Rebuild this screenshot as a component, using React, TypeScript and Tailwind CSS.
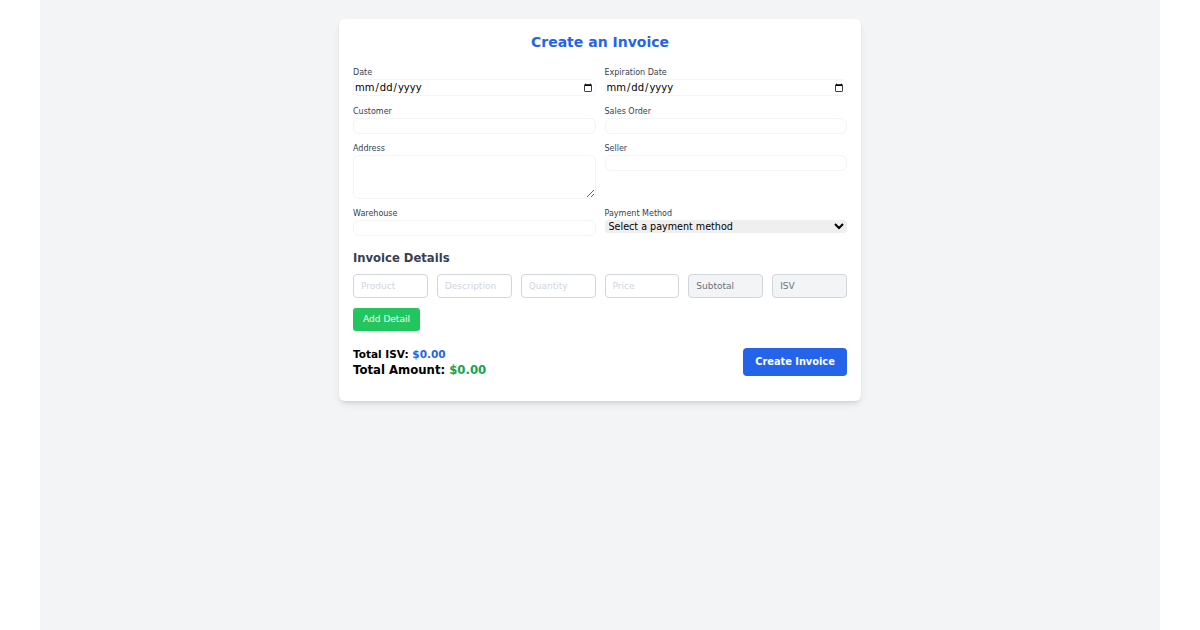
import React, { useState } from "react";

const font = { fontFamily: '"DejaVu Sans", sans-serif' };

function Field(props: { label: string; children: React.ReactNode }) {
  return (
    <div className="flex flex-col">
      <label className="text-[8px] leading-[12px] text-gray-700">{props.label}</label>
      {props.children}
    </div>
  );
}

const plain =
  "w-full h-[16px] rounded-md border border-[#f4f4f6] bg-white text-[10px] leading-[16px] text-black outline-none";

export default function App() {
  const [method, setMethod] = useState("");

  const detailInputs = [
    { ph: "Product", readOnly: false },
    { ph: "Description", readOnly: false },
    { ph: "Quantity", readOnly: false },
    { ph: "Price", readOnly: false },
    { ph: "Subtotal", readOnly: true },
    { ph: "ISV", readOnly: true },
  ];

  return (
    <div className="w-full min-h-screen bg-white" style={font}>
      <div className="mx-auto w-[1120px] min-h-[630px] bg-[#f3f4f6] pt-[19px]">
        <div className="mx-auto w-[522px] rounded-md bg-white px-[14px] pt-[13px] pb-[23px] shadow-md">
          <h1 className="text-center text-[14px] leading-[20px] font-bold text-[#2563eb]">
            Create an Invoice
          </h1>

          <div className="mt-[15px] grid grid-cols-2 gap-x-[9px] gap-y-[9px] items-start">
            <Field label="Date">
              <input type="date" className={plain + " h-[17px] leading-[15px] mb-[1px]"} />
            </Field>
            <Field label="Expiration Date">
              <input type="date" className={plain + " h-[17px] leading-[15px] mb-[1px]"} />
            </Field>
            <Field label="Customer">
              <input type="text" className={plain} />
            </Field>
            <Field label="Sales Order">
              <input type="text" className={plain} />
            </Field>
            <Field label="Address">
              <textarea className="w-full h-[44px] rounded-md border border-[#f4f4f6] bg-white text-[10px] outline-none block" />
            </Field>
            <Field label="Seller">
              <input type="text" className={plain} />
            </Field>
            <Field label="Warehouse">
              <input type="text" className={plain} />
            </Field>
            <Field label="Payment Method">
              <select
                value={method}
                onChange={(e) => setMethod(e.target.value)}
                className="w-full h-[13px] rounded-[3px] bg-[#efefef] text-[9.6px] leading-[13px] text-black outline-none"
              >
                <option value="">Select a payment method</option>
                <option value="cash">Cash</option>
                <option value="card">Card</option>
                <option value="transfer">Transfer</option>
              </select>
            </Field>
          </div>

          <h2 className="mt-[13px] text-[11.6px] leading-[18px] font-bold text-gray-700">
            Invoice Details
          </h2>

          <div className="mt-[7px] grid grid-cols-6 gap-x-[9px]">
            {detailInputs.map((d, i) => (
              <input
                key={i}
                type="text"
                placeholder={d.ph}
                readOnly={d.readOnly}
                className={
                  "h-[24px] w-full rounded-[4px] border border-gray-300 px-[7px] text-[9px] outline-none " +
                  (d.readOnly
                    ? "bg-gray-100 placeholder:text-gray-500"
                    : "bg-white placeholder:text-gray-300")
                }
              />
            ))}
          </div>

          <button className="mt-[10px] h-[23px] w-[67px] rounded-[3px] bg-[#22c55e] text-[9px] text-white">
            Add Detail
          </button>

          <div className="mt-[15px] flex items-center justify-between">
            <div className="font-bold text-black">
              <p className="text-[10.5px] leading-[16px]">
                Total ISV: <span className="text-[#2563eb]">$0.00</span>
              </p>
              <p className="text-[11.7px] leading-[16px]">
                Total Amount: <span className="text-[#16a34a]">$0.00</span>
              </p>
            </div>
            <button className="h-[28px] w-[104px] rounded-[4px] bg-[#2563eb] text-[9.8px] font-bold text-white">
              Create Invoice
            </button>
          </div>
        </div>
      </div>
    </div>
  );
}
